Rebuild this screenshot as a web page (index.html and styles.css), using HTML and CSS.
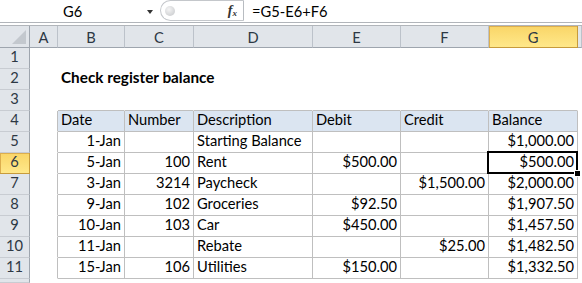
FILE: index.html
```html
<!DOCTYPE html>
<html lang="en">
<head>
  <meta charset="UTF-8">
  <title>Check register balance</title>
  <link rel="stylesheet" href="styles.css">
</head>
<body>
  <div class="fbar">
    <div class="namebox">
      <span class="ref">G6</span>
      <span class="arrow"></span>
    </div>
    <div class="fxbox">
      <span class="knob"></span>
      <span class="fx">f<sub>x</sub></span>
    </div>
    <div class="formula">=G5-E6+F6</div>
  </div>
  <div class="gap"></div>

  <div class="sheet">
    <div class="row head">
      <div class="c rh corner"><span class="tri"></span></div>
      <div class="c ch a">A</div>
      <div class="c ch b">B</div>
      <div class="c ch cc">C</div>
      <div class="c ch d">D</div>
      <div class="c ch e">E</div>
      <div class="c ch f">F</div>
      <div class="c ch g on">G</div>
      <div class="c ch rest"></div>
    </div>

    <div class="row">
      <div class="c rh">1</div>
      <div class="c a"></div><div class="c b"></div><div class="c cc"></div><div class="c d"></div>
      <div class="c e"></div><div class="c f"></div><div class="c g"></div>
    </div>
    <div class="row">
      <div class="c rh">2</div>
      <div class="c a"></div>
      <div class="c title">Check register balance</div>
    </div>
    <div class="row">
      <div class="c rh">3</div>
      <div class="c a"></div>
      <div class="c b top"></div><div class="c cc top"></div><div class="c d top"></div>
      <div class="c e top"></div><div class="c f top"></div><div class="c g top"></div>
    </div>
    <div class="row">
      <div class="c rh">4</div>
      <div class="c a lt"></div>
      <div class="c b t th">Date</div>
      <div class="c cc t th">Number</div>
      <div class="c d t th">Description</div>
      <div class="c e t th">Debit</div>
      <div class="c f t th">Credit</div>
      <div class="c g t th">Balance</div>
    </div>
    <div class="row">
      <div class="c rh">5</div>
      <div class="c a lt"></div>
      <div class="c b t n">1-Jan</div>
      <div class="c cc t n"></div>
      <div class="c d t">Starting Balance</div>
      <div class="c e t n"></div>
      <div class="c f t n"></div>
      <div class="c g t n">$1,000.00</div>
    </div>
    <div class="row">
      <div class="c rh on">6</div>
      <div class="c a lt"></div>
      <div class="c b t n">5-Jan</div>
      <div class="c cc t n">100</div>
      <div class="c d t">Rent</div>
      <div class="c e t n">$500.00</div>
      <div class="c f t n"></div>
      <div class="c g t n sel">$500.00<span class="handle"></span></div>
    </div>
    <div class="row">
      <div class="c rh">7</div>
      <div class="c a lt"></div>
      <div class="c b t n">3-Jan</div>
      <div class="c cc t n">3214</div>
      <div class="c d t">Paycheck</div>
      <div class="c e t n"></div>
      <div class="c f t n">$1,500.00</div>
      <div class="c g t n">$2,000.00</div>
    </div>
    <div class="row">
      <div class="c rh">8</div>
      <div class="c a lt"></div>
      <div class="c b t n">9-Jan</div>
      <div class="c cc t n">102</div>
      <div class="c d t">Groceries</div>
      <div class="c e t n">$92.50</div>
      <div class="c f t n"></div>
      <div class="c g t n">$1,907.50</div>
    </div>
    <div class="row">
      <div class="c rh">9</div>
      <div class="c a lt"></div>
      <div class="c b t n">10-Jan</div>
      <div class="c cc t n">103</div>
      <div class="c d t">Car</div>
      <div class="c e t n">$450.00</div>
      <div class="c f t n"></div>
      <div class="c g t n">$1,457.50</div>
    </div>
    <div class="row">
      <div class="c rh">10</div>
      <div class="c a lt"></div>
      <div class="c b t n">11-Jan</div>
      <div class="c cc t n"></div>
      <div class="c d t">Rebate</div>
      <div class="c e t n"></div>
      <div class="c f t n">$25.00</div>
      <div class="c g t n">$1,482.50</div>
    </div>
    <div class="row">
      <div class="c rh">11</div>
      <div class="c a lt"></div>
      <div class="c b t n">15-Jan</div>
      <div class="c cc t n">106</div>
      <div class="c d t">Utilities</div>
      <div class="c e t n">$150.00</div>
      <div class="c f t n"></div>
      <div class="c g t n">$1,332.50</div>
    </div>
    <div class="row last">
      <div class="c rh"></div>
    </div>
  </div>
</body>
</html>
```

FILE: styles.css
```css
body {
  margin: 0;
  width: 582px;
  height: 283px;
  overflow: hidden;
  background: #fff;
  font-family: "Lato", "Liberation Sans", sans-serif;
  font-size: 14.7px;
  color: #000;
}

/* formula bar */
.fbar {
  display: flex;
  height: 22px;
  border-bottom: 1px solid #b1b5ba;
}
.namebox {
  width: 160px;
  display: flex;
  align-items: center;
}
.ref {
  margin-left: 63px;
}
.arrow {
  margin-left: auto;
  margin-right: 7px;
  margin-top: 2px;
  border-left: 3.5px solid transparent;
  border-right: 3.5px solid transparent;
  border-top: 4px solid #333;
}
.fxbox {
  width: 84px;
  height: 21px;
  box-sizing: border-box;
  border: 1px solid #c4c7cb;
  border-right-color: #b8bcc1;
  border-radius: 11px 0 0 11px;
  background: #fff;
  display: flex;
  align-items: center;
}
.knob {
  width: 10px;
  height: 10px;
  margin-left: 4px;
  border-radius: 50%;
  background: radial-gradient(circle at 40% 35%, #f4f4f4, #c4c6c9);
}
.fx {
  margin-left: auto;
  margin-right: 6px;
  font-family: "Liberation Serif", serif;
  font-style: italic;
  font-weight: bold;
  font-size: 14px;
  color: #333;
}
.fx sub {
  font-size: 9px;
  vertical-align: -1px;
}
.formula {
  padding-left: 8px;
  display: flex;
  align-items: center;
}
.gap {
  height: 2px;
}

/* sheet */
.row {
  display: flex;
  height: 21px;
}
.row.head {
  height: 22px;
  border-top: 1px solid #b1b5ba;
}
.row.last {
  height: 4px;
}
.c {
  box-sizing: border-box;
  height: 100%;
  flex: none;
  border-right: 1px solid transparent;
  border-bottom: 1px solid transparent;
  display: flex;
  align-items: flex-end;
  padding: 0 3px 3px;
  white-space: nowrap;
  position: relative;
}
.a { width: 28px; }
.b { width: 67px; }
.cc { width: 69px; }
.d { width: 119px; }
.e { width: 88px; }
.f { width: 88px; }
.g { width: 89px; }
.rest { width: 4px; }

.rh {
  width: 30px;
  background: #e1e5ea;
  border-right-color: #9ea5ae;
  border-bottom-color: #c8ccd2;
  justify-content: center;
  color: #2d3844;
  padding: 0 0 3px;
}
.ch {
  background: #e1e5ea;
  border-right-color: #bcc2ca;
  border-bottom-color: #9ea5ae;
  justify-content: center;
  align-items: center;
  padding: 0;
  color: #2d3844;
}
.corner {
  border-bottom-color: #9ea5ae;
}
.tri {
  position: absolute;
  right: 3px;
  bottom: 3px;
  border-left: 14px solid transparent;
  border-bottom: 14px solid #c3c8ce;
}
.on {
  background: linear-gradient(#f9d567, #ffe88a);
  border-right-color: #c79b3c;
  border-bottom-color: #c79b3c;
  box-shadow: inset 1px 1px 0 #dcae4e;
}

.title {
  width: 300px;
  font-weight: bold;
  font-size: 15.3px;
}
.top { border-bottom-color: #bfbfbf; }
.lt { border-right-color: #bfbfbf; }
.t {
  border-right-color: #bfbfbf;
  border-bottom-color: #bfbfbf;
}
.th { background: #dbe5f1; }
.n { justify-content: flex-end; }

.sel::after {
  content: "";
  position: absolute;
  left: -2px;
  top: -2px;
  right: -1px;
  bottom: -1px;
  border: 2px solid #000;
}
.handle {
  position: absolute;
  right: -4px;
  bottom: -4px;
  width: 5px;
  height: 5px;
  background: #000;
  border: 1px solid #fff;
  z-index: 2;
}
```
